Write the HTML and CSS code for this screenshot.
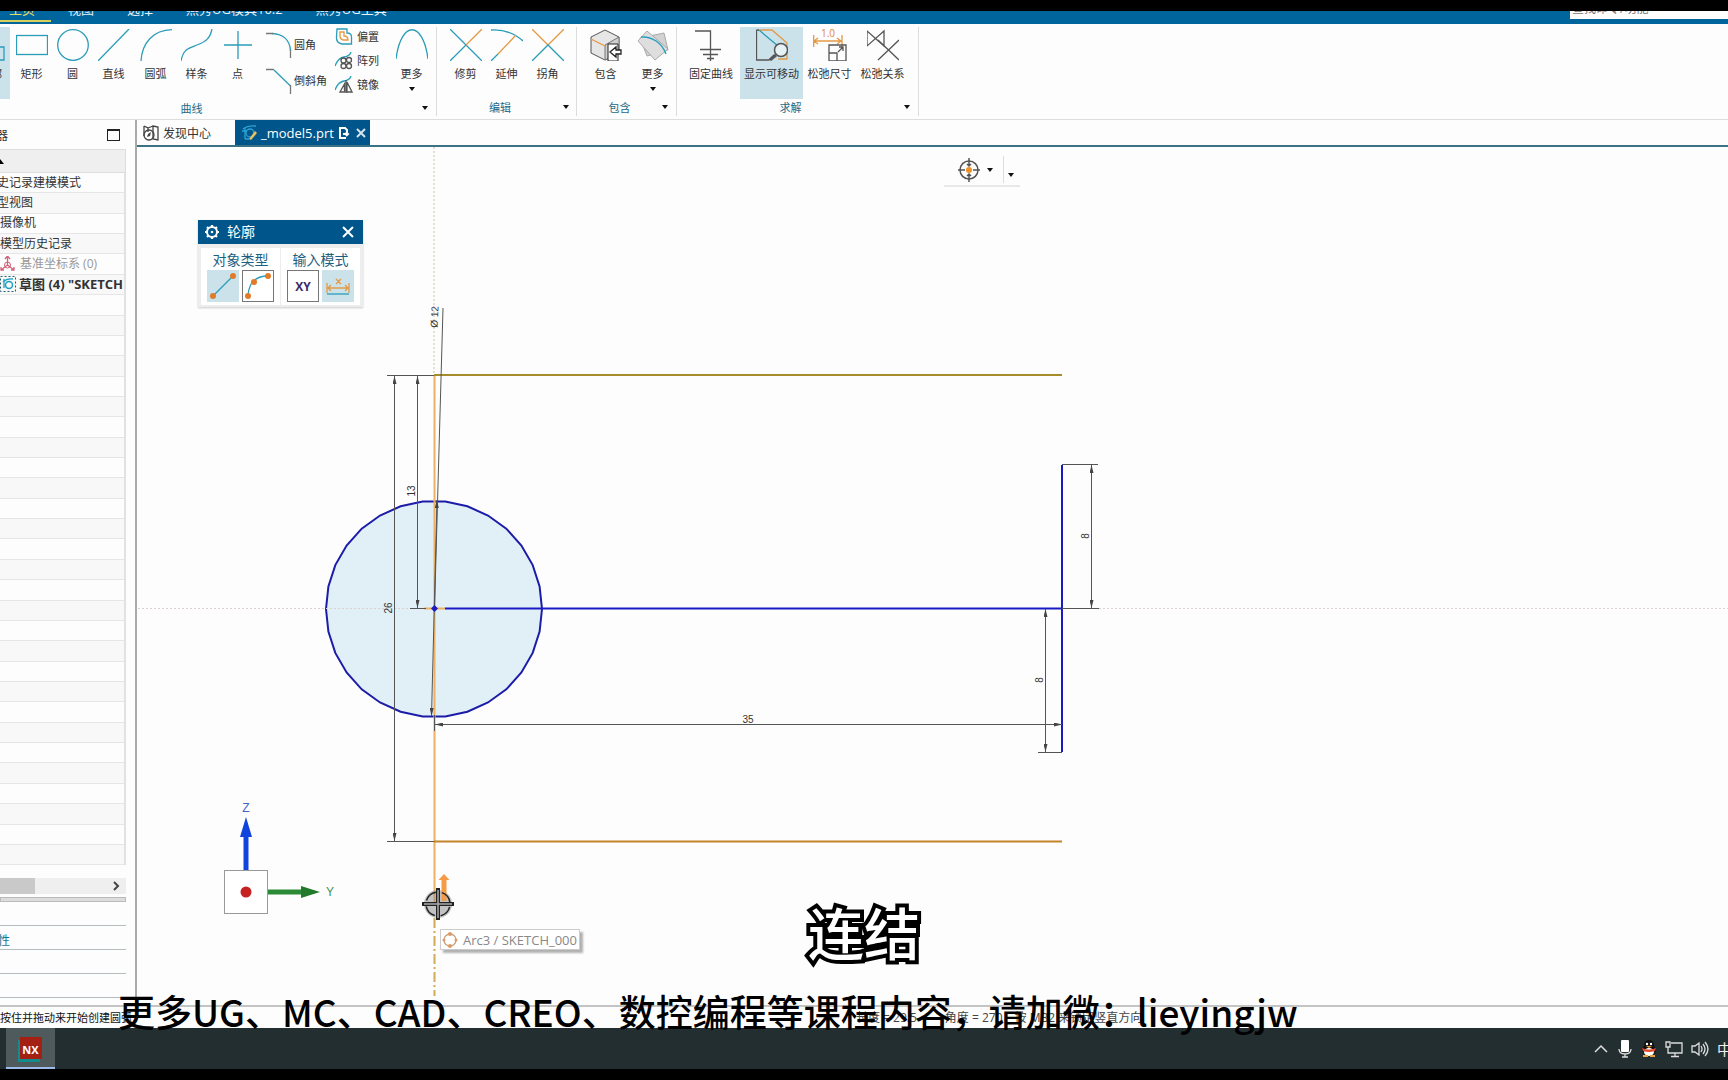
FILE: index.html
```html
<!DOCTYPE html>
<html lang="zh-CN">
<head>
    <meta charset="UTF-8">
    <meta name="viewport" content="width=device-width, initial-scale=1.0">
    <title>_model5.prt</title>
    <link rel="stylesheet" href="styles.css">
</head>
<body>
    <div class="letterbox"></div>

    <header class="menu-bar">
        <nav class="menu-tabs">
            <a href="#" class="menu-tab active">主页</a>
            <a href="#" class="menu-tab">视图</a>
            <a href="#" class="menu-tab">选择</a>
            <a href="#" class="menu-tab">燕秀UG模具10.2</a>
            <a href="#" class="menu-tab">燕秀UG工具</a>
        </nav>
        <input class="menu-search" type="text" placeholder="查找命令/功能" aria-label="查找命令">
    </header>

    <!-- 功能区 -->
    <div class="ribbon">
        <section class="group group-curve">
            <div class="tools">
                <button class="tool tool-profile selected">
                    <svg width="32" height="32" viewBox="0 0 32 32"><path class="teal" d="M2 18H29V31H2"/></svg>
                    <span>轮廓</span>
                </button>
                <div class="cluster">
                    <button class="tool">
                        <svg width="32" height="32" viewBox="0 0 32 32"><rect class="teal" x="0.5" y="6.5" width="31" height="19"/></svg>
                        <span>矩形</span>
                    </button>
                    <button class="tool">
                        <svg width="32" height="32" viewBox="0 0 32 32"><circle class="teal" cx="16" cy="16" r="15.3"/></svg>
                        <span>圆</span>
                    </button>
                    <button class="tool">
                        <svg width="32" height="32" viewBox="0 0 32 32"><path class="teal" d="M0 32L31 0"/></svg>
                        <span>直线</span>
                    </button>
                </div>
                <div class="cluster">
                    <button class="tool">
                        <svg width="32" height="32" viewBox="0 0 32 32"><path class="teal" d="M1 32C2 14 13 1 32 .7"/></svg>
                        <span>圆弧</span>
                    </button>
                    <button class="tool">
                        <svg width="32" height="32" viewBox="0 0 32 32"><path class="teal" d="M0 32C2 20 8 19 16 16S29 10 31 0"/></svg>
                        <span>样条</span>
                    </button>
                    <button class="tool">
                        <svg width="32" height="32" viewBox="0 0 32 32"><path class="teal" d="M2 16H30M16 2V30"/></svg>
                        <span>点</span>
                    </button>
                </div>
                <div class="stack">
                    <button class="mini tall">
                        <svg width="27" height="27" viewBox="0 0 27 27"><path class="teal" d="M7 1.500C18 2 25 8 25.500 19"/><path class="grey" d="M1 1.500H8M25.500 18V26"/></svg>
                        <span>圆角</span>
                    </button>
                    <button class="mini tall">
                        <svg width="27" height="27" viewBox="0 0 27 27"><path class="teal" d="M9 2L25.500 18"/><path class="grey" d="M1 1.500H9M25.500 17V26"/></svg>
                        <span>倒斜角</span>
                    </button>
                </div>
                <div class="stack stack-small">
                    <button class="mini">
                        <svg width="18" height="18" viewBox="0 0 18 18"><path class="teal" d="M2 1H12V5Q17 5 16.500 10V16H7Q1 15 1.500 9Z"/><path class="orange" d="M5 4H9V8Q13 8 13 12H8Q5 11 5 8Z"/></svg>
                        <span>偏置</span>
                    </button>
                    <button class="mini">
                        <svg width="18" height="18" viewBox="0 0 18 18"><path class="teal" d="M0 14Q3 6 9 5T16 0"/><g class="dark"><circle cx="8.500" cy="8.500" r="2.500"/><circle cx="14" cy="8" r="2.500"/><circle cx="8.500" cy="14" r="2.500"/><circle cx="14" cy="14" r="2.500"/></g></svg>
                        <span>阵列</span>
                    </button>
                    <button class="mini">
                        <svg width="18" height="18" viewBox="0 0 18 18"><path class="teal" d="M0 14Q3 6 9 5T16 0"/><path class="dark" d="M5 16L9.500 8V16ZM12 6V16H17L12 6M11 4V17"/></svg>
                        <span>镜像</span>
                    </button>
                </div>
                <button class="tool">
                    <svg width="32" height="32" viewBox="0 0 32 32"><path class="teal" d="M0 30C5 -9 27 -9 32 30"/></svg>
                    <span>更多</span>
                    <i class="caret"></i>
                </button>
            </div>
            <div class="group-title"><span>曲线</span><i class="caret"></i></div>
        </section>

        <section class="group group-edit">
            <div class="tools">
                <button class="tool">
                    <svg width="32" height="32" viewBox="0 0 32 32"><path class="teal" d="M0 0L32 32M0 32L16 16"/><path class="orange" d="M16 16L32 0"/></svg>
                    <span>修剪</span>
                </button>
                <button class="tool">
                    <svg width="32" height="32" viewBox="0 0 32 32"><path class="teal" d="M0 1Q19 0 32 12M0 32L7 25"/><path class="orange" d="M7 25L25 6"/></svg>
                    <span>延伸</span>
                </button>
                <button class="tool">
                    <svg width="32" height="32" viewBox="0 0 32 32"><path class="orange" d="M0 0L16 16L32 0"/><path class="teal" d="M0 32L16 16L32 32"/></svg>
                    <span>拐角</span>
                </button>
            </div>
            <div class="group-title"><span>编辑</span><i class="caret"></i></div>
        </section>

        <section class="group group-include">
            <div class="tools">
                <button class="tool tool-medium">
                    <svg width="32" height="32" viewBox="0 0 32 32"><path fill="#e6e6e6" stroke="#555" d="M1 8L15 1L29 8V24L15 31L1 24Z"/><path fill="#cfcfcf" stroke="#777" d="M15 16L29 8V24L15 31Z"/><path class="orange" d="M1 10L15 17"/><path fill="#fff" stroke="#222" d="M18 15H28V32H18Z"/><path fill="#fff" stroke="#222" stroke-width="1.300" d="M20 23L26 18V21H31V25H26V28Z"/></svg>
                    <span>包含</span>
                </button>
                <button class="tool tool-medium">
                    <svg width="32" height="32" viewBox="0 0 32 32"><path fill="#d2d2d2" stroke="#aaa" d="M3 9L27 4L31 21L10 27Z"/><path fill="#dedede" stroke="#aaa" d="M1 12L10 2L31 20L18 31Z"/><path fill="none" stroke="#27a0c0" stroke-width="1.500" d="M4 8C15 7 25 14 29 25"/></svg>
                    <span>更多</span>
                    <i class="caret"></i>
                </button>
            </div>
            <div class="group-title"><span>包含</span><i class="caret"></i></div>
        </section>

        <section class="group group-solve">
            <div class="tools">
                <button class="tool tool-wide">
                    <svg width="32" height="32" viewBox="0 0 32 32"><path class="dark" d="M0 2H15.500V32M5 20.500H26M8 25.500H23M12 29.500H19"/></svg>
                    <span>固定曲线</span>
                </button>
                <button class="tool tool-widest selected">
                    <svg width="32" height="32" viewBox="0 0 32 32"><path class="orange" stroke-width="2" d="M4 1H16L31 14V30H22"/><path class="teal" d="M3 1L22 17"/><path class="dark" d="M0.500 1V31H13L18 26M0.500 1H3"/><circle cx="25" cy="21" r="6.500" fill="#e6f1f5" stroke="#555" stroke-width="1.500"/><path d="M20 26L14 31" stroke="#555" stroke-width="3"/></svg>
                    <span>显示可移动</span>
                </button>
                <button class="tool tool-wide">
                    <svg width="34" height="32" viewBox="0 0 34 32"><text class="icon-text" x="8" y="8">1.0</text><path class="orange" d="M.700 6V18M29 6V18M1 12H28M5 9L1 12L5 15M24 9L28 12L24 15"/><path class="dark" d="M16 16H33V32H16ZM16 24H24V32M25 23L30 18M26 18H30V22"/></svg>
                    <span>松弛尺寸</span>
                </button>
                <button class="tool tool-wide">
                    <svg width="32" height="32" viewBox="0 0 32 32"><path class="dark" d="M0 2L17 17V2L0 17ZM11 31L32 11M11 11L32 31"/></svg>
                    <span>松弛关系</span>
                </button>
            </div>
            <div class="group-title"><span>求解</span><i class="caret"></i></div>
        </section>
    </div>

    <main class="workspace">
        <!-- 部件导航器 -->
        <aside class="navigator">
            <div class="navigator-head">
                <span>器</span>
                <button class="restore" aria-label="还原"></button>
            </div>
            <div class="tree-head"><svg width="4" height="5" viewBox="0 0 4 5"><path d="M0 0L4 5H0Z"/></svg></div>
            <ul class="tree">
                <li class="cut">史记录建模模式</li>
                <li class="cut">型视图</li>
                <li>摄像机</li>
                <li>模型历史记录</li>
                <li class="muted"><svg width="16" height="16" viewBox="0 0 16 16"><path fill="none" stroke="#d0637c" stroke-width="1.300" d="M7.500 1V9L1 14M7.500 9L14 14M5 3L7.500 0L10 3M1 11V14H4M11 14H14V11"/><circle cx="7.500" cy="9" r="3" fill="none" stroke="#d0637c"/></svg>基准坐标系 (0)</li>
                <li class="current"><svg width="16" height="16" viewBox="0 0 16 16"><rect x="0.500" y="0.500" width="15" height="15" fill="none" stroke="#24606e" stroke-dasharray="2 2"/><circle cx="9" cy="9" r="3.500" fill="none" stroke="#1f9fc0" stroke-width="1.500"/><path d="M4 3V12M3 6Q7 2 13 3" fill="none" stroke="#1f9fc0" stroke-width="1.300"/></svg>草图 (4) "SKETCH</li>
                <li></li><li></li><li></li><li></li><li></li><li></li><li></li>
                <li></li><li></li><li></li><li></li><li></li><li></li><li></li>
                <li></li><li></li><li></li><li></li><li></li><li></li><li></li>
                <li></li><li></li><li></li><li></li><li></li><li></li><li></li>
            </ul>
            <div class="h-scroll"><div class="h-thumb"></div><svg width="8" height="10" viewBox="0 0 8 10"><path d="M2 1L6 5L2 9" fill="none" stroke="#444" stroke-width="2"/></svg></div>
            <div class="splitter"></div>
            <div class="fold"></div>
            <div class="fold">性</div>
            <div class="fold"></div>
            <div class="fold last"></div>
        </aside>

        <div class="view">
            <div class="doc-tabs">
                <button class="doc-tab">
                    <svg width="16" height="16" viewBox="0 0 16 16"><path fill="none" stroke="#444" stroke-width="1.300" d="M1 1L5 3V7M1 1V11M10 1L15 2V15L10 14ZM10 1L5 3"/><circle cx="6" cy="10" r="5" fill="none" stroke="#444" stroke-width="1.300"/><path d="M4 12L5 9L8 7L7 11Z" fill="#444"/></svg>
                    发现中心
                </button>
                <button class="doc-tab active">
                    <svg width="16" height="16" viewBox="0 0 16 16"><path fill="none" stroke="#2ba3d4" stroke-width="1.300" d="M1 4Q6 0 14 1M3 2V14M0 6H5M3 14H7"/><circle cx="8" cy="8" r="4" fill="none" stroke="#2ba3d4" stroke-width="1.300"/><path d="M7 14L13 6L15 8L9 15Z" fill="#e5c068"/></svg>
                    <span>_model5.prt</span>
                    <svg class="page-icon" width="12" height="12" viewBox="0 0 12 12"><path fill="none" stroke="#fff" stroke-width="2" d="M8 11H2V1H7L9 3V5M5 7H10M8 5L10 7L8 9"/></svg>
                    <svg width="10" height="10" viewBox="0 0 10 10"><path stroke="#d5e4ee" stroke-width="2" d="M1 1L9 9M9 1L1 9"/></svg>
                </button>
            </div>

            <div class="canvas">
                <svg class="sketch" viewBox="137 147 1591 859" preserveAspectRatio="xMinYMin slice">
                    <defs>
                        <marker id="arrow" viewBox="0 0 8 4" refX="8" refY="2" markerWidth="8" markerHeight="4" markerUnits="userSpaceOnUse" orient="auto-start-reverse"><path d="M0 0L8 2L0 4Z" fill="#444"/></marker>
                    </defs>
                    <!-- 基准轴 -->
                    <path class="axis-v" d="M434 147V375"/>
                    <path class="axis-h" d="M138 608.500H326M1099 608.500H1728"/>
                    <!-- 圆 -->
                    <g transform="translate(434 609)">
                        <polygon class="disc" points="108,0 105.600,22.500 98.700,43.900 87.400,63.500 72.300,80.300 54,93.500 33.400,102.700 11.300,107.400 -11.300,107.400 -33.400,102.700 -54,93.500 -72.300,80.300 -87.400,63.500 -98.700,43.900 -105.600,22.500 -108,0 -105.600,-22.500 -98.700,-43.900 -87.400,-63.500 -72.300,-80.300 -54,-93.500 -33.400,-102.700 -11.300,-107.400 11.300,-107.400 33.400,-102.700 54,-93.500 72.300,-80.300 87.400,-63.500 98.700,-43.900 105.600,-22.500"/>
                    </g>
                    <path class="axis-h" d="M326 608.500H410"/>
                    <!-- 轮廓线 -->
                    <path class="line-orange" d="M434.500 375V905M424 608.500H445"/>
                    <path class="line-olive" d="M434 375H1062"/>
                    <path class="line-amber" d="M434 841.500H1062"/>
                    <path class="line-guide" d="M434.500 918V996"/>
                    <path class="line-blue" d="M445 608.500H1062M1062 465V752"/>
                    <!-- 尺寸 -->
                    <g class="ext">
                        <path d="M387 375.500H434M387 841.500H434M410 608.500H426M434.500 715V731M1062 464.500H1098M1062 608.500H1099M1038 752.500H1062M443 308L434.500 609"/>
                    </g>
                    <g class="dim">
                        <path d="M394.500 376V841"/>
                        <path d="M417.500 376V608"/>
                        <path d="M435 724.500H1062"/>
                        <path d="M1091.500 465V608"/>
                        <path d="M1045.500 609V752"/>
                        <path d="M437 500L431.500 716"/>
                    </g>
                    <g class="dim-text">
                        <text transform="translate(392 608) rotate(-90)">26</text>
                        <text transform="translate(415 491) rotate(-90)">13</text>
                        <text x="748" y="723">35</text>
                        <text transform="translate(1089 536) rotate(-90)">8</text>
                        <text transform="translate(1043 680) rotate(-90)">8</text>
                        <text transform="translate(438 317) rotate(-88)">Ø 12</text>
                    </g>
                    <path d="M434.500 605L438 608.500L434.500 612L431 608.500Z" fill="#1c1cc0"/>
                    <!-- 坐标系 -->
                    <rect x="224.500" y="870.500" width="43" height="43" fill="#fff" stroke="#999"/>
                    <path d="M246 870V834" stroke="#0f45dc" stroke-width="5"/>
                    <path d="M246 817L252 837H240Z" fill="#0f45dc"/>
                    <path d="M268 892H303" stroke="#2b8a35" stroke-width="5"/>
                    <path d="M320 892L301 886V898Z" fill="#217a2a"/>
                    <circle cx="246" cy="892" r="5.500" fill="#c62222"/>
                    <text class="triad-z" x="246" y="812">Z</text>
                    <text class="triad-y" x="330" y="896">Y</text>
                    <!-- 光标 -->
                    <circle cx="438" cy="904" r="14" fill="#888" fill-opacity="0.5"/>
                    <path d="M444 874L449.500 880H446.500V901H441.500V880H438.500Z" fill="#f59a45"/>
                    <circle cx="438" cy="904" r="12" fill="none" stroke="#222" stroke-width="1.500" stroke-dasharray="13 6" stroke-dashoffset="-3"/>
                    <path d="M438 888V920M422 904H454" stroke="#222" stroke-width="4"/>
                    <path d="M438 890V918M424 904H452" stroke="#aaa" stroke-width="1.500"/>
                </svg>

                <div class="view-bar">
                    <button class="view-bar-btn" aria-label="捕捉点">
                        <svg width="22" height="24" viewBox="0 0 22 24"><circle cx="11" cy="12" r="9" fill="none" stroke="#555" stroke-width="1.500"/><path d="M11 0V8M11 16V24M0 12H7M15 12H22M9 6L11 8L13 6M9 18L11 16L13 18" fill="none" stroke="#555" stroke-width="1.500"/><circle cx="11" cy="12" r="3" fill="#ef9226"/></svg>
                        <i class="caret"></i>
                    </button>
                    <button class="view-bar-more" aria-label="更多"><i class="caret"></i></button>
                </div>

                <!-- 轮廓对话框 -->
                <div class="dialog">
                    <div class="dialog-head">
                        <svg width="16" height="16" viewBox="0 0 16 16"><circle cx="8" cy="8" r="5" fill="none" stroke="#fff" stroke-width="2"/><circle cx="8" cy="8" r="1.300" fill="#fff"/><path stroke="#fff" stroke-width="2.200" d="M8 1V3M8 13V15M1 8H3M13 8H15M3 3L4.500 4.500M11.500 11.500L13 13M13 3L11.500 4.500M4.500 11.500L3 13"/></svg>
                        <h2>轮廓</h2>
                        <button class="dialog-close" aria-label="关闭"><svg width="12" height="12" viewBox="0 0 12 12"><path stroke="#fff" stroke-width="2" d="M1 1L11 11M11 1L1 11"/></svg></button>
                    </div>
                    <div class="dialog-body">
                        <div class="option">
                            <h3>对象类型</h3>
                            <div class="option-row">
                                <button class="opt on" aria-label="直线"><svg width="32" height="32" viewBox="0 0 32 32"><path class="teal" d="M6 26L26 6"/><g fill="#e07b2a"><circle cx="6" cy="26" r="3"/><circle cx="26" cy="6" r="3"/></g></svg></button>
                                <button class="opt" aria-label="圆弧"><svg width="30" height="30" viewBox="0 0 30 30"><path class="teal" d="M5 25Q6 5 25 5"/><g fill="#e07b2a"><circle cx="5" cy="25" r="3"/><circle cx="11" cy="11" r="3"/><circle cx="25" cy="5" r="3"/></g></svg></button>
                            </div>
                        </div>
                        <div class="option">
                            <h3>输入模式</h3>
                            <div class="option-row">
                                <button class="opt">XY</button>
                                <button class="opt on" aria-label="参数模式"><svg width="32" height="32" viewBox="0 0 32 32"><path class="teal" d="M5 24H27"/><path class="orange" d="M5 13V23M27 13V23M6 18H26M9 15L6 18L9 21M23 15L26 18L23 21M14 9L19 14M19 9L14 14"/></svg></button>
                            </div>
                        </div>
                    </div>
                </div>

                <div class="pick-tip">
                    <svg width="16" height="16" viewBox="0 0 16 16"><circle cx="8" cy="8" r="6" fill="none" stroke="#c2a77d" stroke-width="1.300"/><g fill="#dd9a62"><circle cx="8" cy="2" r="2"/><circle cx="8" cy="14" r="2"/><circle cx="2" cy="8" r="1.500"/><circle cx="14" cy="8" r="1.500"/></g></svg>
                    Arc3 / SKETCH_000
                </div>
            </div>
        </div>
    </main>

    <footer class="status-bar">
        <span class="status-cue">按住并拖动来开始创建圆弧</span>
        <span class="status-info"><span>长度 = 29.5</span><span>角度 = 270，按 MB2 来锁定竖直方向</span></span>
    </footer>

    <div class="taskbar">
        <button class="task-app" aria-label="NX"><span class="nx">NX</span></button>
        <div class="tray">
            <svg width="16" height="18" viewBox="0 0 16 18"><path d="M2 12L8 6L14 12" fill="none" stroke="#ddd" stroke-width="1.500"/></svg>
            <svg width="16" height="18" viewBox="0 0 16 18"><rect x="4" y="0" width="8" height="12" rx="1" fill="#fff"/><path d="M2 9Q2 14 8 14T14 9M8 14V17M5 17H11" fill="none" stroke="#ddd" stroke-width="1.300"/></svg>
            <svg width="16" height="18" viewBox="0 0 16 18"><ellipse cx="8" cy="10" rx="7" ry="6" fill="#151515"/><circle cx="8" cy="5" r="5" fill="#111"/><circle cx="6" cy="4" r="1.200" fill="#fff"/><circle cx="10" cy="4" r="1.200" fill="#fff"/><path d="M5 6H11L8 8Z" fill="#f0a030"/><ellipse cx="8" cy="12" rx="5" ry="4" fill="#fff"/><path d="M1 8Q8 11 15 8L14 11Q8 13 2 11Z" fill="#e14a30"/><path d="M2 16H7M9 16H14" stroke="#e8a040" stroke-width="2"/></svg>
            <svg width="18" height="18" viewBox="0 0 18 18"><path d="M6 3H17V13H3V8M10 13V16M6 16.500H14M1 2H5V7H1ZM3 7V9" fill="none" stroke="#ddd" stroke-width="1.300"/></svg>
            <svg width="18" height="18" viewBox="0 0 18 18"><path d="M1 6H4L8 3V15L4 12H1ZM10 6Q12 9 10 12M12 4Q16 9 12 14M14 2Q20 9 14 16" fill="none" stroke="#ddd" stroke-width="1.300"/></svg>
            <span class="ime">中</span>
        </div>
    </div>

    <div class="letterbox"></div>

    <p class="subtitle">连结</p>
    <p class="caption">更多UG、MC、CAD、CREO、数控编程等课程内容，请加微：lieyingjw</p>
</body>
</html>
```

FILE: styles.css
```css
* {
    box-sizing: border-box;
}
body {
    margin: 0;
    height: 100vh;
    display: flex;
    flex-direction: column;
    position: relative;
    overflow: hidden;
    font-family: "Open Sans", "Noto Sans CJK SC", sans-serif;
    font-size: 12px;
    color: #333;
    background-color: #fdfdfd;
}
button {
    font: inherit;
    color: inherit;
    border: none;
    background: none;
    padding: 0;
    margin: 0;
}
h2, h3, p, ul {
    margin: 0;
    padding: 0;
    font-weight: normal;
}
svg {
    display: block;
    flex: none;
}
.letterbox {
    height: 11px;
    flex: none;
    background-color: #000;
}
.caret {
    width: 0;
    height: 0;
    border: 3px solid transparent;
    border-top: 4px solid #111;
    border-bottom: none;
}

/* icon strokes */
.teal, .orange, .grey, .dark {
    fill: none;
    stroke-width: 1.3;
}
.teal {
    stroke: #2a9db8;
}
.orange {
    stroke: #e39a45;
}
.grey {
    stroke: #777;
}
.dark {
    stroke: #555;
}
.icon-text {
    font-size: 10px;
    fill: #e08a2a;
}

/* menu */
.menu-bar {
    height: 13px;
    flex: none;
    display: flex;
    justify-content: space-between;
    align-items: flex-start;
    overflow: hidden;
    background-color: #00659c;
}
.menu-tabs {
    display: flex;
    align-items: flex-end;
    height: 11px;
}
.menu-tab {
    padding: 0 16px 4px 17px;
    font-size: 13px;
    line-height: 18px;
    color: #e8f2f8;
    text-decoration: none;
    white-space: nowrap;
}
.menu-tab.active {
    padding: 0 16px 2px 9px;
    color: #e6dc6a;
    border-bottom: 2px solid #d8cf5a;
}
.menu-search {
    width: 158px;
    height: 18px;
    margin-top: -10px;
    padding: 0 2px 4px;
    border: none;
    font-family: inherit;
    font-size: 12px;
    background-color: #fff;
}

/* ribbon */
.ribbon {
    display: flex;
    flex: none;
    height: 96px;
    padding-top: 3px;
    border-bottom: 1px solid #ddd;
    background-color: #fdfdfd;
    font-size: 11px;
}
.group {
    display: flex;
    flex-direction: column;
    height: 89px;
    border-right: 1px solid #ddd;
}
.group-curve {
    margin-left: -39px;
    padding: 0 4px 0 11px;
}
.group-edit {
    padding: 0 8px;
}
.group-include {
    padding: 0 0 0 5px;
}
.group-solve {
    padding: 0 9px 0 5px;
}
.tools {
    display: flex;
    height: 75px;
}
.cluster {
    display: flex;
    padding-left: 1px;
}
.tool {
    display: flex;
    flex-direction: column;
    align-items: center;
    width: 41px;
    padding-top: 2px;
    line-height: 16px;
    white-space: nowrap;
}
.tool span {
    margin-top: 5px;
}
.tool .caret {
    margin-top: 5px;
}
.tool-profile {
    width: 38px;
}
.tool-medium {
    width: 47px;
}
.tool-wide {
    width: 53px;
}
.tool-widest {
    width: 63px;
}
.group-solve .tool-wide:first-child {
    width: 58px;
}
.selected {
    background-color: #cbe2eb;
}
.stack {
    display: flex;
    flex-direction: column;
    padding: 0 1px 0 7px;
}
.stack-small {
    margin-top: -2px;
    padding-right: 12px;
}
.mini {
    display: flex;
    align-items: center;
    gap: 4px;
    height: 24px;
    line-height: 16px;
}
.mini.tall {
    height: 36px;
    gap: 2px;
}
.group-title {
    display: flex;
    align-items: center;
    justify-content: center;
    height: 18px;
    color: #1c6a88;
}
.group-title span {
    flex: 1;
    text-align: center;
}
.group-curve .group-title {
    margin-left: -11px;
}
.group-edit .group-title {
    margin: 0 -1px 0 -8px;
}
.group-include .group-title {
    margin-left: -5px;
}
.group-solve .group-title {
    margin: 0 -1px 0 -5px;
}
.group-curve .group-title .caret {
    margin-right: 4px;
}
.group-include .group-title .caret {
    margin-right: 8px;
}

/* navigator */
.workspace {
    flex: 1;
    min-height: 0;
    display: flex;
}
.navigator {
    width: 137px;
    flex: none;
    display: flex;
    flex-direction: column;
    padding-bottom: 7px;
    border-right: 2px solid #aaa;
}
.navigator-head {
    display: flex;
    align-items: center;
    justify-content: space-between;
    height: 29px;
    padding-right: 15px;
    text-indent: -4px;
}
.restore {
    width: 13px;
    height: 12px;
    border: 1px solid #222;
    border-top-width: 2px;
}
.tree-head {
    display: flex;
    align-items: center;
    height: 24px;
    width: 126px;
    background-color: #efefef;
    border: 1px solid #ddd;
    border-left: none;
}
.tree {
    flex: 1;
    display: flex;
    flex-direction: column;
    width: 126px;
    margin-bottom: 13px;
    border-right: 2px solid #e2e2e2;
    list-style: none;
}
.tree li {
    flex: 1;
    display: flex;
    align-items: center;
    gap: 4px;
    min-height: 0;
    overflow: hidden;
    white-space: nowrap;
    line-height: 18px;
    border-bottom: 1px solid #e6e6e6;
}
.tree li:nth-child(even) {
    background-color: #f8f8f8;
}
.tree .cut {
    text-indent: -3px;
}
.tree .muted {
    color: #999;
}
.tree .current {
    gap: 3px;
    font-size: 13px;
    font-weight: bold;
}
.h-scroll {
    display: flex;
    align-items: center;
    justify-content: space-between;
    width: 126px;
    height: 16px;
    padding-right: 6px;
    background-color: #efefef;
}
.h-thumb {
    width: 35px;
    height: 16px;
    background-color: #c9c9c9;
}
.splitter {
    width: 126px;
    height: 5px;
    margin-top: 3px;
    background-color: #dcdcdc;
    border: 1px solid #bbb;
}
.fold {
    width: 126px;
    height: 24px;
    line-height: 30px;
    text-indent: -2px;
    border-bottom: 1px solid #b5bcbf;
    color: #1c7590;
}
.fold.last {
    width: 135px;
}

/* view */
.view {
    flex: 1;
    min-width: 0;
    display: flex;
    flex-direction: column;
}
.doc-tabs {
    display: flex;
    flex: none;
    height: 27px;
    border-bottom: 2px solid #3c7285;
}
.doc-tab {
    display: flex;
    align-items: center;
    gap: 4px;
    width: 98px;
    padding-left: 6px;
    white-space: nowrap;
}
.doc-tab.active {
    gap: 3px;
    width: 135px;
    padding-left: 7px;
    font-size: 13px;
    color: #fff;
    background-color: #00558a;
}
.page-icon {
    margin: 0 3px 0 1px;
}
.canvas {
    flex: 1;
    min-height: 0;
    position: relative;
    overflow: hidden;
}
.sketch {
    width: 100%;
    height: 100%;
}
.axis-v, .axis-h {
    fill: none;
    stroke: #cdbfa8;
    stroke-dasharray: 2 2;
}
.axis-h {
    stroke: #dcd0d2;
}
.disc {
    fill: #e0f0f6;
    stroke: #1c1ca8;
    stroke-width: 2;
}
.line-orange, .line-olive, .line-amber, .line-blue, .line-guide {
    fill: none;
    stroke-width: 2;
}
.line-orange {
    stroke: #eeb062;
}
.line-olive {
    stroke: #a78c2c;
}
.line-amber {
    stroke: #c48428;
}
.line-blue {
    stroke: #1a1ac4;
}
.line-guide {
    stroke: #d3aa55;
    stroke-dasharray: 10 3 2 3;
}
.ext, .dim {
    fill: none;
    stroke: #555;
}
.dim path {
    marker-start: url(#arrow);
    marker-end: url(#arrow);
}
.dim-text {
    font-family: "Liberation Sans", sans-serif;
    font-size: 10px;
    fill: #333;
    text-anchor: middle;
}
.triad-z, .triad-y {
    font-family: "Liberation Sans", sans-serif;
    font-size: 12px;
    text-anchor: middle;
    fill: #3f66c4;
}
.triad-y {
    fill: #3d9455;
}

/* floating selection bar */
.view-bar {
    position: absolute;
    top: 7px;
    left: 807px;
    display: flex;
    height: 33px;
    padding: 2px 6px 2px 14px;
    border-bottom: 2px solid #e8e8e8;
}
.view-bar-btn {
    display: flex;
    align-items: center;
    gap: 7px;
    padding-right: 10px;
    border-right: 1px solid #ddd;
}
.view-bar-more {
    display: flex;
    align-items: flex-end;
    padding: 0 0 6px 4px;
}

/* dialog */
.dialog {
    position: absolute;
    top: 73px;
    left: 61px;
    width: 165px;
    background-color: #ededed;
    box-shadow: 0 1px 2px rgba(0,0,0,0.2);
}
.dialog-head {
    display: flex;
    align-items: center;
    gap: 7px;
    height: 24px;
    padding: 0 9px 0 6px;
    color: #fff;
    background-color: #00558a;
}
.dialog-head h2 {
    flex: 1;
    font-size: 14px;
    line-height: 24px;
}
.dialog-body {
    display: flex;
    gap: 1px;
    padding: 4px 3px 2px;
}
.option {
    flex: 1;
    padding: 2px 4px 3px;
    background-color: #fff;
}
.option h3 {
    font-size: 14px;
    line-height: 20px;
    text-align: center;
    color: #1c5f80;
}
.option-row {
    display: flex;
    justify-content: center;
    gap: 3px;
}
.opt {
    display: flex;
    align-items: center;
    justify-content: center;
    width: 32px;
    height: 32px;
    font-weight: bold;
    color: #3a2a6a;
    border: 1px solid #777;
}
.opt.on {
    border: none;
    background-color: #cbe2eb;
}

.pick-tip {
    position: absolute;
    top: 782px;
    left: 303px;
    display: flex;
    align-items: center;
    gap: 5px;
    height: 21px;
    padding: 0 2px 0 1px;
    font-size: 13px;
    color: #888;
    white-space: nowrap;
    background-color: #fff;
    border: 1px solid #ccc;
    box-shadow: 3px 3px 2px rgba(0,0,0,0.3);
}

/* status and taskbar */
.status-bar {
    flex: none;
    display: flex;
    height: 23px;
    line-height: 21px;
    font-size: 11px;
    color: #111;
    white-space: nowrap;
    border-top: 2px solid #c4c4c4;
}
.status-cue {
    width: 50%;
}
.status-info {
    display: flex;
    gap: 28px;
    margin-left: -8px;
    font-size: 12px;
    color: #444;
}
.taskbar {
    flex: none;
    display: flex;
    justify-content: space-between;
    height: 41px;
    padding-left: 6px;
    overflow: hidden;
    background-color: #232e31;
}
.task-app {
    display: flex;
    align-items: center;
    justify-content: center;
    width: 49px;
    border-bottom: 2px solid #9dbbe8;
    background-color: #4f5a5c;
}
.nx {
    width: 22px;
    height: 22px;
    font-size: 11px;
    line-height: 26px;
    font-weight: bold;
    color: #fff;
    background-color: #a32012;
    box-shadow: -2px 3px 0 #138a8c;
}
.tray {
    display: flex;
    align-items: center;
    gap: 8px;
    margin-right: -4px;
}
.ime {
    font-size: 15px;
    color: #eee;
}

/* video captions */
.subtitle {
    position: absolute;
    left: 0;
    right: 0;
    bottom: 109px;
    font-family: "Noto Sans CJK SC", sans-serif;
    font-size: 56px;
    font-weight: 500;
    line-height: 80px;
    text-align: center;
    color: #fff;
    -webkit-text-stroke: 8px #000;
    paint-order: stroke fill;
}
.caption {
    position: absolute;
    left: 118px;
    bottom: 41px;
    font-family: "Noto Sans CJK SC", sans-serif;
    font-size: 37px;
    font-weight: 500;
    line-height: 56px;
    white-space: nowrap;
    color: #000;
}
```
